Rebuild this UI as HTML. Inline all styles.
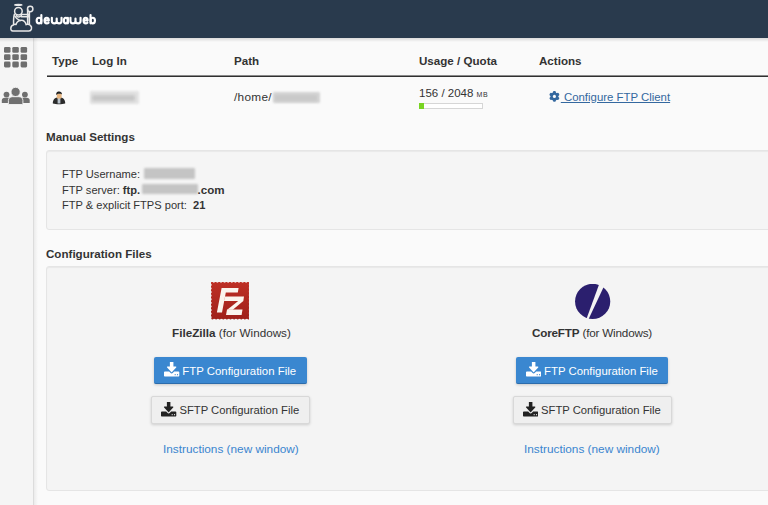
<!DOCTYPE html>
<html><head><meta charset="utf-8">
<style>
*{margin:0;padding:0;box-sizing:border-box}
html,body{width:768px;height:505px;overflow:hidden}
body{font-family:"Liberation Sans",sans-serif;background:#fafafa;color:#333;position:relative;font-size:11.5px}
.abs{position:absolute;white-space:nowrap}
#hdr{position:absolute;left:0;top:0;width:768px;height:38px;background:#293a4d}
#side{position:absolute;left:0;top:38px;width:34px;height:467px;background:#f5f5f5;border-right:1px solid #dcdcdc}
#sideshadow{position:absolute;left:34px;top:38px;width:4px;height:467px;background:linear-gradient(to right,rgba(0,0,0,0.06),rgba(0,0,0,0))}
.th{font-weight:bold;font-size:11.6px;color:#333}
.hline{position:absolute;left:47px;top:75px;width:721px;height:2px;border-top:1px solid #8a8a8a;background:#303030}
.well{position:absolute;background:#f5f5f5;border:1px solid #e5e5e5;border-radius:3px;box-shadow:inset 0 1px 1px rgba(0,0,0,0.05)}
.sec{font-weight:bold;font-size:11.6px;color:#333}
.blur{position:absolute;background:#c9c9c9;filter:blur(1.1px);border-radius:1px}
.btn-blue{position:absolute;background:#3a87d0;border-bottom:1px solid #2c6cab;border-radius:2px;box-shadow:0 1px 3px rgba(0,0,0,0.18);color:#fff}
.btn-def{position:absolute;background:#efefef;border:1px solid #d8d8d8;border-radius:2px;box-shadow:0 1px 3px rgba(0,0,0,0.16);color:#333}
.link2{color:#3a85cf}
</style></head><body>
<svg width="0" height="0" style="position:absolute"><defs><path id="dl" d="M1344 1344q0-26-19-45t-45-19-45 19-19 45 19 45 45 19 45-19 19-45zm256 0q0-26-19-45t-45-19-45 19-19 45 19 45 45 19 45-19 19-45zm128-224v320q0 40-28 68t-68 28h-1472q-40 0-68-28t-28-68v-320q0-40 28-68t68-28h465l135 136q58 56 136 56t136-56l136-136h464q40 0 68 28t28 68zm-325-569q17 41-14 70l-448 448q-18 19-45 19t-45-19l-448-448q-31-29-14-70 17-39 59-39h256v-448q0-26 19-45t45-19h256q26 0 45 19t19 45v448h256q42 0 59 39z"/></defs></svg>
<div id="hdr">
  <svg class="abs" style="left:8px;top:2px" width="28" height="32" viewBox="0 0 28 32">
    <g fill="none" stroke="#e8e8e8" stroke-width="1.5" stroke-linejoin="round" stroke-linecap="round">
      <ellipse cx="10.3" cy="2.9" rx="4.3" ry="1.15" fill="#e8e8e8" stroke="none"/>
      <circle cx="10.4" cy="9.3" r="3.8"/>
      <path d="M6.4 12.2 C5.6 14.5 5.5 19 5.6 22.4"/>
      <path d="M6.8 14 C7.8 16.2 9.6 17.8 12.2 18.6"/>
      <path d="M8.4 13.6 C9.4 15.2 11 15.4 12.6 14.2"/>
      <rect x="13.3" y="12.4" width="7.6" height="2.3"/>
      <circle cx="22.2" cy="7" r="2.7"/>
      <path d="M19.6 7.6 V22 M21.4 10.2 V22"/>
      <path d="M4.75 28.9 H20.9 C23.6 28.9 24.4 25.4 22.6 23.6 C21.5 22.4 19.6 22 18.1 22.6 C17.3 19.8 15.6 18.3 13.5 18.3 C11 18.3 8.8 20 8 22.5 C7.3 22.1 6 22.3 5.3 23 C2.4 23.6 1.8 28.9 4.75 28.9 Z"/>
    </g>
  </svg>
  <svg class="abs" style="left:0;top:0" width="110" height="38" viewBox="0 0 110 38">
    <g fill="none" stroke="#fff" stroke-width="2.15" stroke-linecap="round" stroke-linejoin="round">
      <ellipse cx="39" cy="20.55" rx="2.35" ry="2.8"/><path d="M41.35 15.05 V23.35"/>
      <path d="M44.55 20.4 H48.85 C48.85 18.8 47.9 17.75 46.7 17.75 C45.4 17.75 44.55 18.9 44.55 20.55 C44.55 22.3 45.5 23.35 46.8 23.35 C47.6 23.35 48.2 23.1 48.6 22.7"/>
      <path d="M51.85 17.75 V21 C51.85 22.4 52.9 23.35 54.3 23.35 C55.7 23.35 56.7 22.4 56.7 21 V18.6 M56.7 21 C56.7 22.4 57.7 23.35 59.1 23.35 C60.5 23.35 61.55 22.4 61.55 21 V17.75"/>
      <ellipse cx="65.85" cy="20.55" rx="2" ry="2.8"/><path d="M67.85 17.75 V23.35"/>
      <path d="M70.45 17.75 V21 C70.45 22.4 71.5 23.35 72.95 23.35 C74.4 23.35 75.5 22.4 75.5 21 V18.6 M75.5 21 C75.5 22.4 76.6 23.35 78.05 23.35 C79.5 23.35 80.55 22.4 80.55 21 V17.75"/>
      <path d="M83.55 20.4 H87.65 C87.65 18.8 86.75 17.75 85.6 17.75 C84.35 17.75 83.55 18.9 83.55 20.55 C83.55 22.3 84.45 23.35 85.7 23.35 C86.5 23.35 87.05 23.1 87.45 22.7"/>
      <path d="M90.55 15.05 V23.35"/><ellipse cx="92.75" cy="20.55" rx="2.2" ry="2.8"/>
    </g>
  </svg>
</div>
<div id="side">
  <svg class="abs" style="left:4px;top:9px" width="24" height="21" viewBox="0 0 24 21">
    <g fill="#6e6e6e">
      <rect x="0" y="0" width="6.5" height="5.8" rx="1.3"/><rect x="8.3" y="0" width="6.5" height="5.8" rx="1.3"/><rect x="16.6" y="0" width="6.5" height="5.8" rx="1.3"/>
      <rect x="0" y="7.3" width="6.5" height="5.8" rx="1.3"/><rect x="8.3" y="7.3" width="6.5" height="5.8" rx="1.3"/><rect x="16.6" y="7.3" width="6.5" height="5.8" rx="1.3"/>
      <rect x="0" y="14.6" width="6.5" height="5.8" rx="1.3"/><rect x="8.3" y="14.6" width="6.5" height="5.8" rx="1.3"/><rect x="16.6" y="14.6" width="6.5" height="5.8" rx="1.3"/>
    </g>
  </svg>
  <svg class="abs" style="left:1px;top:49px" width="30" height="19" viewBox="0 0 30 19">
    <g fill="#707070">
      <circle cx="5.5" cy="7.6" r="2.9"/><path d="M0.8 15.9 V13.6 C0.8 11.8 2 10.8 3.6 10.8 H7.6 C9 10.8 10 11.6 10 13 V15.9Z"/>
      <circle cx="23.9" cy="7.6" r="2.9"/><path d="M28.7 15.9 V13.6 C28.7 11.8 27.5 10.8 25.9 10.8 H21.9 C20.5 10.8 19.5 11.6 19.5 13 V15.9Z"/>
      <g stroke="#f4f4f4" stroke-width="0.9">
      <circle cx="14.6" cy="4.9" r="4.6"/>
      <path d="M7.4 17 V13.4 C7.4 11.2 9.2 9.7 11.4 9.7 H17.9 C20.1 9.7 21.9 11.2 21.9 13.4 V17 Q21.9 17.5 21.4 17.5 H7.9 Q7.4 17.5 7.4 17Z"/>
      </g>
    </g>
  </svg>
</div>
<div id="sideshadow"></div>
<div class="abs" style="left:0;top:38px;width:768px;height:4px;background:linear-gradient(to bottom,rgba(0,0,0,0.13),rgba(0,0,0,0))"></div>

<!-- table header -->
<div class="abs th" style="left:52px;top:54px">Type</div>
<div class="abs th" style="left:92px;top:54px">Log In</div>
<div class="abs th" style="left:234px;top:54px">Path</div>
<div class="abs th" style="left:419px;top:54px">Usage / Quota</div>
<div class="abs th" style="left:539px;top:54px">Actions</div>
<div class="hline"></div>

<!-- row -->
<svg class="abs" style="left:52px;top:91px" width="14" height="14" viewBox="0 0 14 14">
  <path d="M0.8 12.5 C0.8 8.5 3 7 5 6.6 L9 6.6 C11 7 13.2 8.5 13.2 12.5 C10 13.6 4 13.6 0.8 12.5Z" fill="#2b2b2b"/>
  <rect x="5.6" y="7" width="2.8" height="5.5" fill="#b9c3cc"/>
  <rect x="4.8" y="2.4" width="4.8" height="5" rx="1" fill="#e7b57f"/>
  <path d="M4.2 4 C4 1 6 0.6 7.2 0.6 C8.6 0.6 10.2 1.2 10 4 L9.6 3 C8 2.8 6 2.6 4.8 3.4Z" fill="#1e1e1e"/>
</svg>
<div class="blur" style="left:89.5px;top:91px;width:49px;height:12.5px;background:#e2e2e2;filter:blur(1.2px)"></div><div class="blur" style="left:92px;top:94.5px;width:43px;height:6.5px;background:#c6c6c6;filter:blur(1.4px)"></div>
<div class="abs" style="left:234px;top:90px;font-size:11.8px;letter-spacing:0.3px;color:#333">/home/</div>
<div class="blur" style="left:273px;top:92px;width:46.5px;height:11px;background:#d4d4d4"></div><div class="blur" style="left:275px;top:94.5px;width:42px;height:6.5px;background:#c8c8c8;filter:blur(1.4px)"></div>
<div class="abs" style="left:419px;top:86.5px;font-size:11.5px;color:#333">156 / 2048 <span style="font-size:7px;letter-spacing:0.5px">MB</span></div>
<div class="abs" style="left:419px;top:103px;width:64px;height:6px;border:1px solid #d6d6d6;background:#fff"></div>
<div class="abs" style="left:419px;top:103px;width:5px;height:6px;background:#78d422"></div>
<svg class="abs" style="left:549px;top:91.3px" width="11" height="11" viewBox="0 0 11 11">
  <g fill="#34689f" transform="translate(5.4 5.4)">
    <circle r="3.9"/>
    <rect x="-1.5" y="-5.3" width="3" height="10.6" rx="1.2"/>
    <rect x="-1.5" y="-5.3" width="3" height="10.6" rx="1.2" transform="rotate(60)"/>
    <rect x="-1.5" y="-5.3" width="3" height="10.6" rx="1.2" transform="rotate(120)"/>
    <circle r="1.55" fill="#fafafa"/>
  </g>
</svg>
<div class="abs" style="left:560.8px;top:91px;font-size:11.4px;color:#34689f;text-decoration:underline">&nbsp;Configure FTP Client</div>

<!-- manual settings -->
<div class="abs sec" style="left:46px;top:130px">Manual Settings</div>
<div class="well" style="left:46px;top:150px;width:740px;height:80px"></div>
<div class="abs" style="left:62px;top:166.8px;font-size:11.1px;line-height:15.8px;color:#333">FTP Username: <br>FTP server: <b>ftp.</b><br>FTP &amp; explicit FTPS port:&nbsp; <b>21</b></div>
<div class="blur" style="left:144px;top:167.5px;width:50.5px;height:11px;background:#c4c4c4"></div>
<div class="blur" style="left:142.3px;top:184px;width:55.7px;height:10.4px;background:#c4c4c4"></div>
<div class="abs" style="left:197.5px;top:183.4px;font-size:11.6px;font-weight:bold;color:#333">.com</div>

<!-- config files -->
<div class="abs sec" style="left:46px;top:247px">Configuration Files</div>
<div class="well" style="left:46px;top:266px;width:740px;height:225px;background:#f4f4f4"></div>

<!-- filezilla -->
<svg class="abs" style="left:211px;top:282px" width="38" height="38" viewBox="0 0 38 38">
  <defs><linearGradient id="fzg" x1="0" y1="0" x2="0" y2="1"><stop offset="0" stop-color="#bd2f25"/><stop offset="1" stop-color="#a0211a"/></linearGradient></defs>
  <rect x="1" y="1" width="36.5" height="35.5" fill="url(#fzg)" stroke="url(#fzg)" stroke-width="0.8"/>
  <rect x="1" y="1" width="36.5" height="35.5" fill="none" stroke="url(#fzg)" stroke-width="2.2" stroke-dasharray="0 3.6" stroke-linecap="round"/>
  <g fill="#fbf5ee"><path d="M10.6 5.9 L27.6 5.9 L26.8 10.5 L14.8 10.5 L11 30.4 L5.9 30.4 Z"/>
  <path d="M13.8 14.6 L33 14.6 L32.3 19.1 L13 19.1 Z"/>
  <path d="M27.2 19 L32.3 19 L21.8 27.7 L16.2 27.7 Z"/>
  <path d="M16 27.5 L31.5 27.5 L30.6 32.9 L15 32.9 Z"/></g>
</svg>
<div class="abs" style="left:172px;top:326px;font-size:11.7px;color:#333"><b>FileZilla</b> (for Windows)</div>
<div class="btn-blue" style="left:154px;top:357px;width:153px;height:27px"></div>
<svg class="abs" style="left:164.4px;top:362.4px" width="15.3" height="14.6" viewBox="64 64 1664 1472" preserveAspectRatio="none"><use href="#dl" fill="#fff"/></svg>
<div class="abs" style="left:182.3px;top:364.7px;font-size:11.4px;color:#fff">FTP Configuration File</div>
<div class="btn-def" style="left:151px;top:396px;width:159px;height:28px"></div>
<svg class="abs" style="left:161.4px;top:402px" width="15.3" height="14.6" viewBox="64 64 1664 1472" preserveAspectRatio="none"><use href="#dl" fill="#222"/></svg>
<div class="abs" style="left:179.4px;top:403.5px;font-size:11.25px;color:#333">SFTP Configuration File</div>
<div class="abs link2" style="left:163px;top:442px;font-size:11.8px">Instructions (new window)</div>

<!-- coreftp -->
<svg class="abs" style="left:575px;top:284px" width="36" height="36" viewBox="0 0 36 36">
  <circle cx="17.65" cy="17.4" r="17.6" fill="#2b1f6e"/>
  <path d="M24.6 -1 L30.5 -1 L12.7 37 L10.7 37 Z" fill="#f4f4f4"/>
</svg>
<div class="abs" style="left:532px;top:326px;font-size:11.7px;color:#333;letter-spacing:-0.19px"><b>CoreFTP</b> (for Windows)</div>
<div class="btn-blue" style="left:516px;top:357px;width:152px;height:27px"></div>
<svg class="abs" style="left:525.6px;top:362.4px" width="15.3" height="14.6" viewBox="64 64 1664 1472" preserveAspectRatio="none"><use href="#dl" fill="#fff"/></svg>
<div class="abs" style="left:544px;top:364.7px;font-size:11.4px;color:#fff">FTP Configuration File</div>
<div class="btn-def" style="left:513px;top:396px;width:159px;height:28px"></div>
<svg class="abs" style="left:523.2px;top:402px" width="15.3" height="14.6" viewBox="64 64 1664 1472" preserveAspectRatio="none"><use href="#dl" fill="#222"/></svg>
<div class="abs" style="left:541px;top:403.5px;font-size:11.25px;color:#333">SFTP Configuration File</div>
<div class="abs link2" style="left:524px;top:442px;font-size:11.8px">Instructions (new window)</div>
</body></html>
